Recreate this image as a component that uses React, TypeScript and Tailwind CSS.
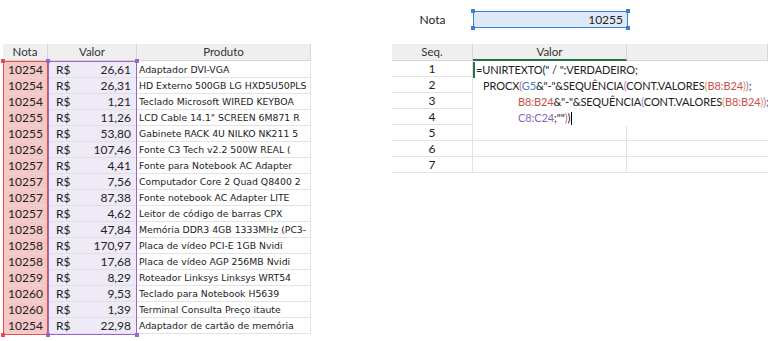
import React from 'react';

type Item = { nota: string; valor: string; produto: string };

const itens: Item[] = [
  { nota: '10254', valor: '26,61', produto: 'Adaptador DVI-VGA' },
  { nota: '10254', valor: '26,31', produto: 'HD Externo 500GB LG HXD5U50PLS' },
  { nota: '10254', valor: '1,21', produto: 'Teclado Microsoft WIRED KEYBOA' },
  { nota: '10255', valor: '11,26', produto: 'LCD Cable 14.1" SCREEN 6M871 R' },
  { nota: '10255', valor: '53,80', produto: 'Gabinete RACK 4U NILKO NK211 5' },
  { nota: '10256', valor: '107,46', produto: 'Fonte C3 Tech v2.2 500W REAL (' },
  { nota: '10257', valor: '4,41', produto: 'Fonte para Notebook AC Adapter' },
  { nota: '10257', valor: '7,56', produto: 'Computador Core 2 Quad Q8400 2' },
  { nota: '10257', valor: '87,38', produto: 'Fonte notebook AC Adapter LITE' },
  { nota: '10257', valor: '4,62', produto: 'Leitor de código de barras CPX' },
  { nota: '10258', valor: '47,84', produto: 'Memória DDR3 4GB 1333MHz (PC3-' },
  { nota: '10258', valor: '170,97', produto: 'Placa de vídeo PCI-E 1GB Nvidi' },
  { nota: '10258', valor: '17,68', produto: 'Placa de vídeo AGP 256MB Nvidi' },
  { nota: '10259', valor: '8,29', produto: 'Roteador Linksys Linksys WRT54' },
  { nota: '10260', valor: '9,53', produto: 'Teclado para Notebook H5639' },
  { nota: '10260', valor: '1,39', produto: 'Terminal Consulta Preço itaute' },
  { nota: '10254', valor: '22,98', produto: 'Adaptador de cartão de memória' },
];

const xl = { fontFamily: 'Lato, "Open Sans", sans-serif' };
const prod = { fontFamily: '"DejaVu Sans", Verdana, sans-serif' };

const Handle = ({ className }: { className: string }) => (
  <span className={`absolute w-[4px] h-[4px] ${className}`} />
);

const Header = ({ w, children, green }: { w: string; children?: React.ReactNode; green?: boolean }) => (
  <div
    className={`${w} h-[17px] bg-[#efefef] border-r border-[#d6d6d6] flex items-center justify-center text-[11.5px] text-[#333] ${
      green ? 'border-b-2 border-b-[#217346]' : 'border-b border-b-[#d6d6d6]'
    }`}
  >
    {children}
  </div>
);

export default function App() {
  return (
    <div className="w-[768px] h-[341px] bg-white overflow-hidden flex text-[#222]" style={xl}>
      {/* tabela de itens */}
      <div className="pl-[3px] pt-[44px] flex">
        <div className="flex flex-col w-[45px]">
          <Header w="w-[45px]">Nota</Header>
          <div className="relative border border-[#e24d4d] bg-[#f5c7c7]">
            {itens.map((it, i) => (
              <div key={i} className="h-[16px] flex items-center justify-center text-[12px] border-b border-[#efd6d6] last:border-b-0">
                {it.nota}
              </div>
            ))}
            <Handle className="bg-[#e24d4d] -left-[3px] -top-[3px]" />
            <Handle className="bg-[#e24d4d] -left-[3px] -bottom-[3px]" />
          </div>
        </div>
        <div className="flex flex-col w-[89px]">
          <Header w="w-[89px]">Valor</Header>
          <div className="relative border border-[#9a65cf] bg-[#eeeaf6]">
            {itens.map((it, i) => (
              <div key={i} className="h-[16px] flex items-center justify-between pl-[7px] pr-[5px] text-[12px] border-b border-[#e2ddec] last:border-b-0">
                <span>R$</span>
                <span>{it.valor}</span>
              </div>
            ))}
            <Handle className="bg-[#9a65cf] -left-[3px] -top-[3px]" />
            <Handle className="bg-[#9a65cf] -right-[3px] -top-[3px]" />
            <Handle className="bg-[#9a65cf] -left-[3px] -bottom-[3px]" />
            <Handle className="bg-[#9a65cf] -right-[3px] -bottom-[3px]" />
          </div>
        </div>
        <div className="flex flex-col w-[174px]">
          <Header w="w-[174px]">Produto</Header>
          <div className="border-t border-transparent">
            {itens.map((it, i) => (
              <div key={i} className="h-[16px] flex items-center pl-[2px] text-[9.3px] whitespace-nowrap overflow-hidden border-b border-r border-[#e3e3e3]" style={prod}>
                {it.produto}
              </div>
            ))}
          </div>
        </div>
      </div>

      {/* consulta por nota */}
      <div className="ml-[81px] pt-[11px] flex flex-col">
        <div className="flex h-[17px]">
          <div className="w-[81px] flex items-center justify-center text-[12px]">Nota</div>
          <div className="relative w-[155px] border border-[#3a7fd5] bg-[#dde9f6] flex items-center justify-end pr-[4px] text-[12px]">
            10255
            <Handle className="bg-[#3a7fd5] -left-[3px] -top-[3px]" />
            <Handle className="bg-[#3a7fd5] -right-[3px] -top-[3px]" />
            <Handle className="bg-[#3a7fd5] -left-[3px] -bottom-[3px]" />
            <Handle className="bg-[#3a7fd5] -right-[3px] -bottom-[3px]" />
          </div>
        </div>

        <div className="relative mt-[16px]">
          <div className="flex">
            <Header w="w-[81px]">Seq.</Header>
            <Header w="w-[154px]" green>Valor</Header>
            <Header w="w-[141px]" />
          </div>
          {[1, 2, 3, 4, 5, 6, 7].map((n) => (
            <div key={n} className="flex h-[16px]">
              <div className="w-[81px] flex items-center justify-center text-[12px] border-b border-r border-[#e3e3e3]">{n}</div>
              <div className="w-[154px] border-b border-r border-[#e3e3e3]" />
              <div className="w-[141px] border-b border-[#e3e3e3]" />
            </div>
          ))}

          {/* edição da fórmula sobre as células */}
          <div className="absolute left-[81px] top-[18px] w-[295px] h-[64px] bg-white text-[11px] tracking-[-0.1px] leading-[16px] whitespace-nowrap">
            <div className="absolute left-0 top-0 w-[2px] h-[16px] bg-[#217346]" />
            <div className="pl-[3px]">=UNIRTEXTO(" / ";VERDADEIRO;</div>
            <div className="pl-[10px]">
              PROCX<span className="text-[#e06060]">(</span>
              <span className="text-[#3d7cc9]">G5</span>&amp;"-"&amp;SEQUÊNCIA<span className="text-[#a879d8]">(</span>CONT.VALORES
              <span className="text-[#e59a3c]">(</span><span className="text-[#c9504b]">B8:B24</span>
              <span className="text-[#e59a3c]">)</span><span className="text-[#a879d8]">)</span>;
            </div>
            <div className="pl-[45px]">
              <span className="text-[#c9504b]">B8:B24</span>&amp;"-"&amp;SEQUÊNCIA<span className="text-[#a879d8]">(</span>CONT.VALORES
              <span className="text-[#e59a3c]">(</span><span className="text-[#c9504b]">B8:B24</span>
              <span className="text-[#e59a3c]">)</span><span className="text-[#a879d8]">)</span>;
            </div>
            <div className="pl-[45px] flex items-center">
              <span className="text-[#8a64bf]">C8:C24</span>;""<span className="text-[#e06060]">)</span>)
              <span className="inline-block w-[1px] h-[13px] bg-black ml-[1px]" />
            </div>
          </div>
        </div>
      </div>
    </div>
  );
}
